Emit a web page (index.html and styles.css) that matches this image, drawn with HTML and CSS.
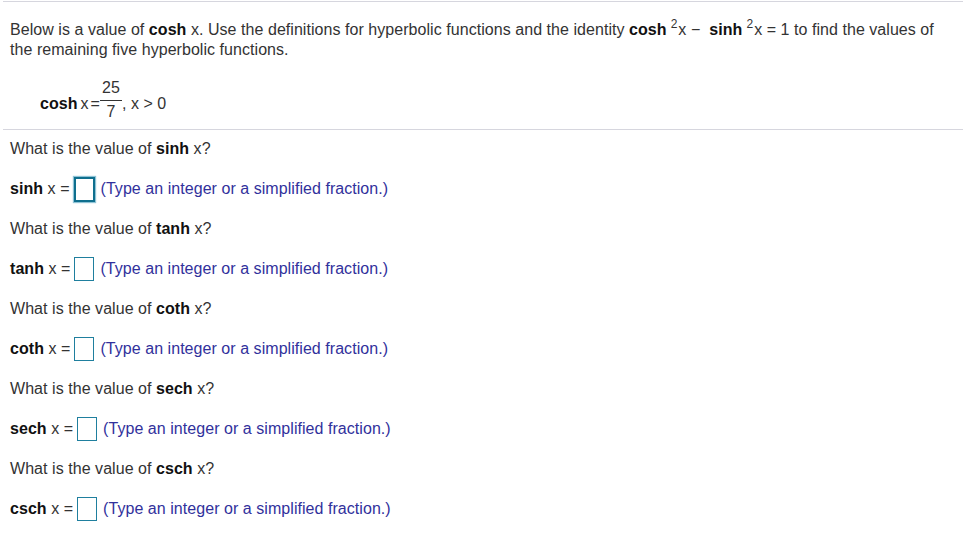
FILE: index.html
```html
<!DOCTYPE html>
<html>
<head>
<meta charset="utf-8">
<link rel="stylesheet" href="styles.css">
</head>
<body>
<div class="page">
  <div class="intro">
    <p class="lead">Below is a value of <b>cosh</b> x. Use the definitions for hyperbolic functions and the identity <b>cosh</b><sup>2</sup>x − &nbsp;<b>sinh</b><sup>2</sup>x = 1 to find the values of the remaining five hyperbolic functions.</p>
    <div class="given"><b>cosh</b><span class="gx">x</span><span class="eq">=</span><span class="frac"><span class="num">25</span><span class="den">7</span></span>, x &gt; 0</div>
  </div>
  <div class="questions">
    <div class="row">What is the value of <b>sinh</b>&nbsp;x?</div>
    <div class="row"><b>sinh</b>&nbsp;x =<span class="box focus"></span><span class="hint">(Type an integer or a simplified fraction.)</span></div>
    <div class="row">What is the value of <b>tanh</b>&nbsp;x?</div>
    <div class="row"><b>tanh</b>&nbsp;x =<span class="box"></span><span class="hint">(Type an integer or a simplified fraction.)</span></div>
    <div class="row">What is the value of <b>coth</b>&nbsp;x?</div>
    <div class="row"><b>coth</b>&nbsp;x =<span class="box"></span><span class="hint">(Type an integer or a simplified fraction.)</span></div>
    <div class="row">What is the value of <b>sech</b>&nbsp;x?</div>
    <div class="row"><b>sech</b>&nbsp;x =<span class="box"></span><span class="hint">(Type an integer or a simplified fraction.)</span></div>
    <div class="row">What is the value of <b>csch</b>&nbsp;x?</div>
    <div class="row"><b>csch</b>&nbsp;x =<span class="box"></span><span class="hint">(Type an integer or a simplified fraction.)</span></div>
  </div>
</div>
</body>
</html>
```

FILE: styles.css
```css
html, body {
  margin: 0;
  padding: 0;
  background: #ffffff;
}
body {
  font-family: "Liberation Sans", Arial, sans-serif;
  font-size: 16px;
  letter-spacing: 0.05px;
  color: #333333;
}
b {
  color: #111111;
  font-weight: bold;
}
.page {
  margin: 1px 0 0 3px;
  border-top: 1px solid #d6d6de;
}
.intro {
  border-bottom: 1px solid #d6d6de;
  padding: 18px 0 10px 7px;
}
.lead {
  margin: 0;
  line-height: 20px;
  padding-right: 14px;
}
.lead sup {
  font-size: 12px;
  line-height: 0;
  vertical-align: 7px;
  margin: 0 1px 0 4px;
}
.given {
  margin-top: 20px;
  padding-left: 30px;
  line-height: 20px;
}
.gx {
  margin-left: 3px;
}
.eq {
  margin-left: 2px;
}
.frac {
  display: inline-flex;
  flex-direction: column;
  align-items: stretch;
  vertical-align: 16px;
  margin: 0;
}
.num {
  line-height: 15px;
  text-align: center;
  padding: 0 2px 5px;
  border-bottom: 1px solid #333;
}
.den {
  line-height: 15px;
  text-align: center;
  padding-top: 3px;
}
.questions {
  padding-left: 7px;
}
.row {
  height: 40px;
  box-sizing: border-box;
  padding-bottom: 2px;
  display: flex;
  align-items: center;
  white-space: pre;
}
.box {
  display: inline-block;
  width: 18px;
  height: 22px;
  border: 1px solid #1f7f9e;
  margin: 0 6px 0 4px;
  background: #fff;
}
.box.focus {
  width: 17px;
  height: 21px;
  border: 2px solid #0f6f8e;
  box-shadow: 0 0 1px 1px #8fc3d6;
  margin: 0 6px 0 4px;
}
.hint {
  color: #31319c;
}
```
